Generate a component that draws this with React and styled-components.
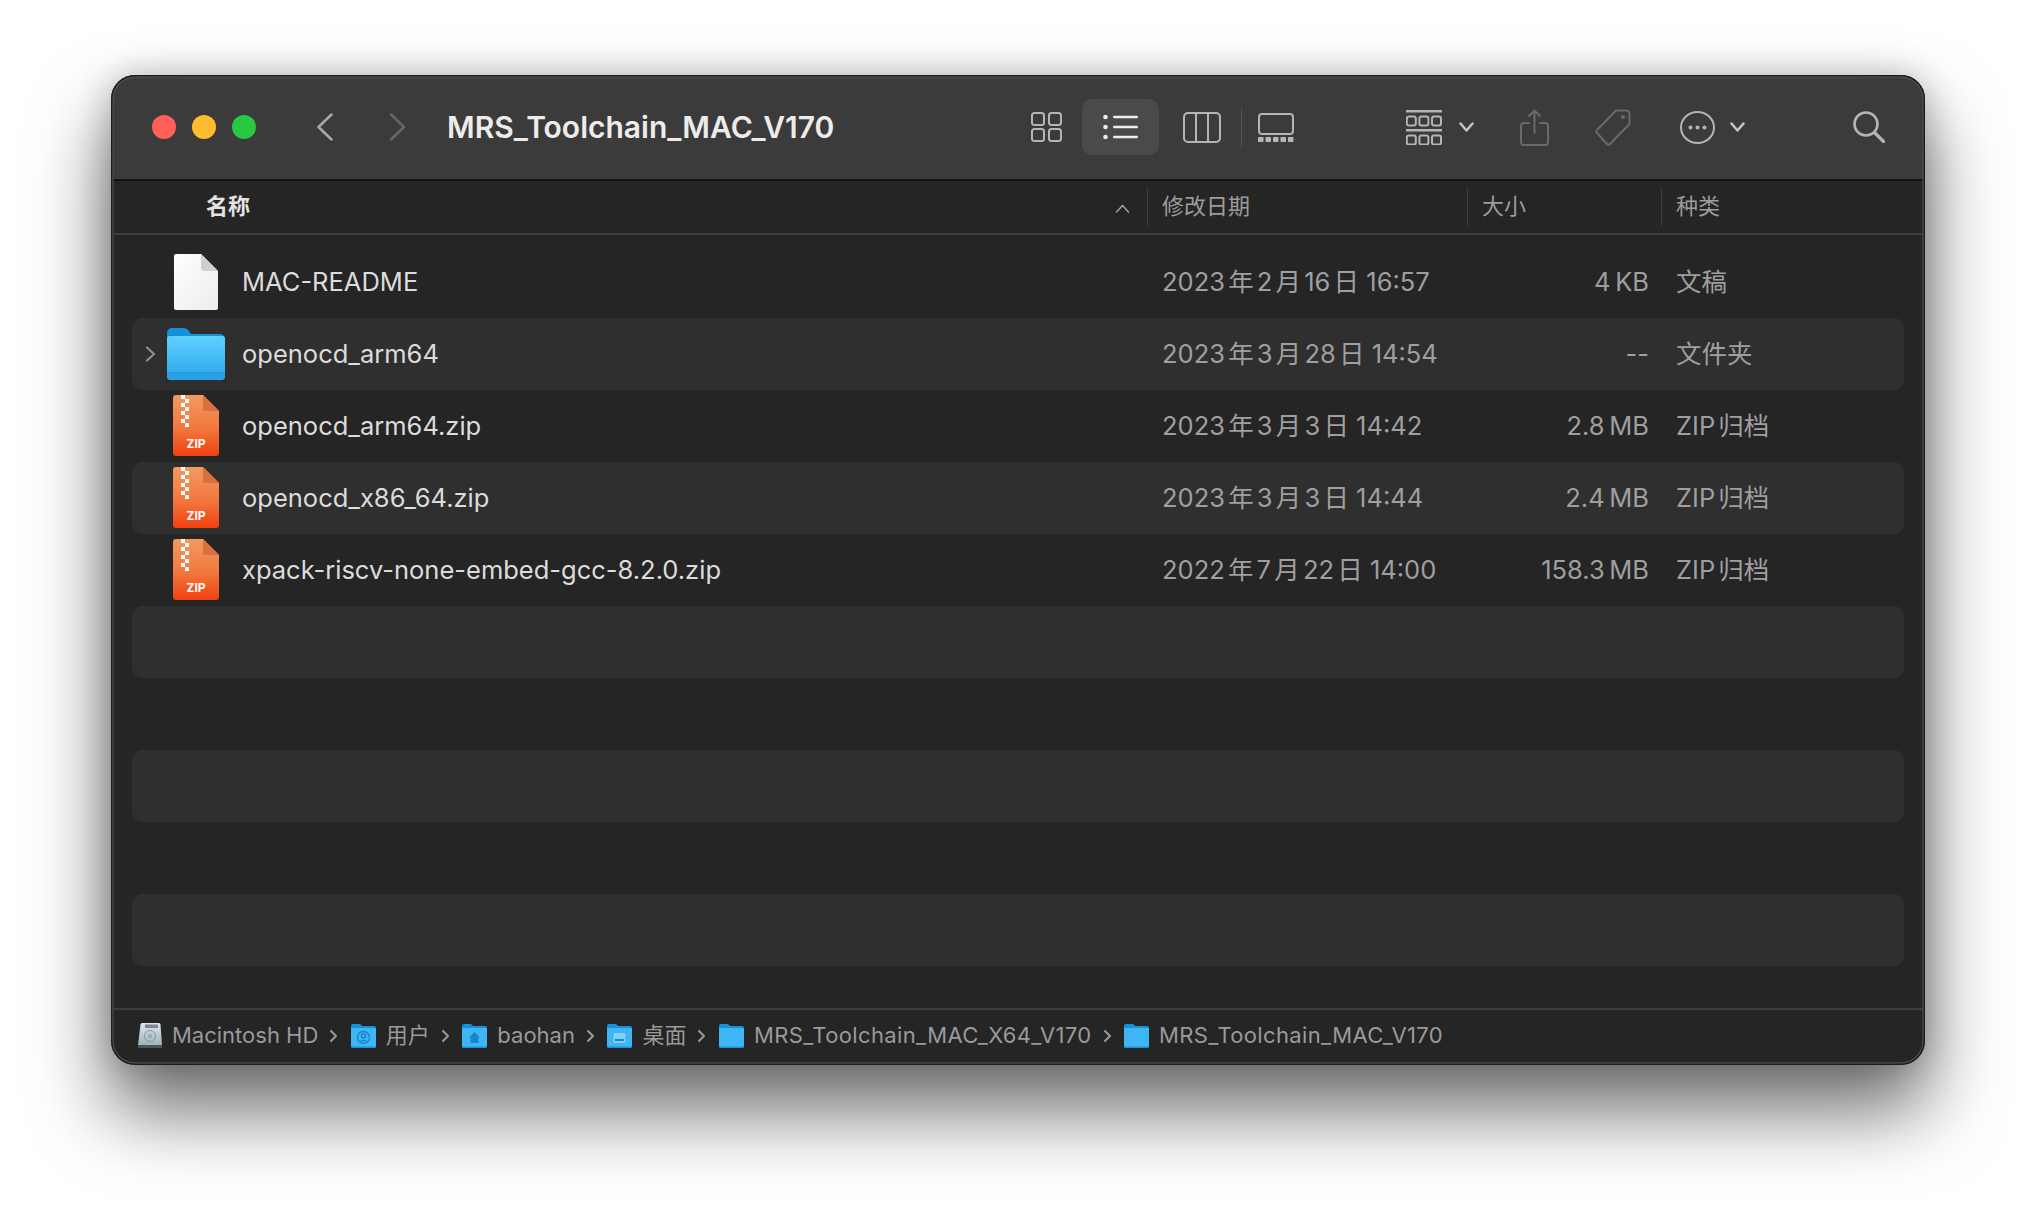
import styled, { createGlobalStyle } from "styled-components";

const GlobalStyle = createGlobalStyle`
  html, body { margin: 0; padding: 0; background: #fff; }
  body { font-family: Inter, "Noto Sans CJK SC", sans-serif; }
`;

const files = [
  { name: "MAC-README", date: "2023年2月16日 16:57", size: "4\u2009KB", kind: "文稿", icon: "doc" },
  { name: "openocd_arm64", date: "2023年3月28日 14:54", size: "--", kind: "文件夹", icon: "folder", expandable: true },
  { name: "openocd_arm64.zip", date: "2023年3月3日 14:42", size: "2.8\u2009MB", kind: "ZIP归档", icon: "zip" },
  { name: "openocd_x86_64.zip", date: "2023年3月3日 14:44", size: "2.4\u2009MB", kind: "ZIP归档", icon: "zip" },
  { name: "xpack-riscv-none-embed-gcc-8.2.0.zip", date: "2022年7月22日 14:00", size: "158.3\u2009MB", kind: "ZIP归档", icon: "zip" },
  {}, {}, {}, {}, {}, {},
];

const DocIcon = () => (
  <svg width="44" height="56" viewBox="0 0 44 56">
    <defs>
      <linearGradient id="docFill" x1="0" y1="0" x2="1" y2="1">
        <stop offset="0" stopColor="#ffffff" />
        <stop offset="1" stopColor="#ececec" />
      </linearGradient>
    </defs>
    <path d="M2 0H27L44 17V54a2 2 0 0 1-2 2H2a2 2 0 0 1-2-2V2a2 2 0 0 1 2-2z" fill="url(#docFill)" />
    <path d="M27 0L44 17H30a3 3 0 0 1-3-3z" fill="#cfcfcf" />
  </svg>
);

const FolderIcon = () => (
  <svg width="58" height="52" viewBox="0 0 58 52">
    <defs>
      <linearGradient id="folderFront" x1="0" y1="0" x2="0" y2="1">
        <stop offset="0" stopColor="#5fd0ff" />
        <stop offset="1" stopColor="#2ba6ec" />
      </linearGradient>
    </defs>
    <path d="M0 5a5 5 0 0 1 5-5H16c3 0 4 1 6 3l2 3H53a5 5 0 0 1 5 5V30H0z" fill="#1590dc" />
    <path d="M0 11a3 3 0 0 1 3-3H55a3 3 0 0 1 3 3V48a4 4 0 0 1-4 4H4a4 4 0 0 1-4-4z" fill="url(#folderFront)" />
    <rect x="0" y="44" width="58" height="1.5" fill="#1f8fd6" opacity="0.7" />
    <path d="M0 46H58V48a4 4 0 0 1-4 4H4a4 4 0 0 1-4-4z" fill="#2a9fe6" />
  </svg>
);

const ZipIcon = () => (
  <svg width="46" height="61" viewBox="0 0 46 61">
    <defs>
      <linearGradient id="zipFill" x1="0" y1="0" x2="0" y2="1">
        <stop offset="0" stopColor="#f29a60" />
        <stop offset="0.55" stopColor="#f2783f" />
        <stop offset="1" stopColor="#f0400e" />
      </linearGradient>
    </defs>
    <path d="M3 0H30L46 16V58a3 3 0 0 1-3 3H3a3 3 0 0 1-3-3V3a3 3 0 0 1 3-3z" fill="url(#zipFill)" />
    <path d="M30 0L46 16H33a3 3 0 0 1-3-3z" fill="#d9703f" />
    {[0, 8, 16, 24].map((y) => (
      <rect key={y} x="8" y={y} width="4" height="4" fill="#fff" />
    ))}
    {[4, 12, 20, 28].map((y) => (
      <rect key={y} x="12" y={y} width="4" height="4" fill="#fff" />
    ))}
    <text x="23" y="53" textAnchor="middle" fontFamily="Inter, sans-serif" fontWeight="700" fontSize="12" fill="#fff">
      ZIP
    </text>
  </svg>
);

const SmallFolder = ({ glyph }) => (
  <svg width="25" height="24" viewBox="0 0 25 24">
    <path d="M0 2a2 2 0 0 1 2-2H8c1 0 2 .6 3 2H23a2 2 0 0 1 2 2V10H0z" fill="#1590dc" />
    <path d="M0 5a1 1 0 0 1 1-1H24a1 1 0 0 1 1 1V22a2 2 0 0 1-2 2H2a2 2 0 0 1-2-2z" fill="#3fb6f4" />
    <path d="M0 22.500H25V22a2 2 0 0 1-2 2H2a2 2 0 0 1-2-2z" fill="#1f8fd6" />
    {glyph === "user" && (
      <g fill="none" stroke="#1a86c9" strokeWidth="1.4">
        <circle cx="12.5" cy="13.5" r="6" />
        <circle cx="12.5" cy="12" r="2" />
        <path d="M9 18c1-2 6-2 7 0" />
      </g>
    )}
    {glyph === "home" && <path d="M12.5 8L18 13.5H16.5V19H8.500V13.500H7z" fill="#1a86c9" />}
    {glyph === "desktop" && (
      <g>
        <rect x="6.500" y="9" width="12" height="10" rx="1" fill="#7fd0f7" />
        <rect x="8" y="15" width="9" height="2" fill="#1a86c9" />
      </g>
    )}
  </svg>
);

const DiskIcon = () => (
  <svg width="24" height="25" viewBox="0 0 24 25">
    <defs>
      <linearGradient id="diskFill" x1="0" y1="0" x2="0" y2="1">
        <stop offset="0" stopColor="#dfe7ea" />
        <stop offset="1" stopColor="#9fb4bd" />
      </linearGradient>
    </defs>
    <path d="M4 0H21a1.500 1.500 0 0 1 1.500 1.500L24 22H0L2.500 1.500A1.500 1.500 0 0 1 4 0z" fill="url(#diskFill)" />
    <rect x="7" y="1.500" width="13" height="3.500" fill="#7c8a90" />
    <circle cx="12" cy="13" r="5.500" fill="none" stroke="#8499a3" strokeWidth="1" />
    <circle cx="12" cy="13" r="1.500" fill="none" stroke="#8499a3" strokeWidth="1" />
    <rect x="0" y="22" width="24" height="3" fill="#4c5659" />
  </svg>
);

const stroke = { fill: "none", stroke: "currentColor", strokeWidth: 2, strokeLinecap: "round", strokeLinejoin: "round" };

const Back = () => (
  <svg width="16" height="28" viewBox="0 0 16 28"><path d="M14.500 1.500L1.500 14L14.500 26.500" {...stroke} strokeWidth="2.500" /></svg>
);
const Forward = () => (
  <svg width="17" height="28" viewBox="0 0 17 28"><path d="M2 1.500L15 14L2 26.500" {...stroke} strokeWidth="2.500" /></svg>
);
const GridGlyph = () => (
  <svg width="31" height="30" viewBox="0 0 31 30">
    <g {...stroke}>
      <rect x="1" y="1" width="12" height="12" rx="2.500" />
      <rect x="18" y="1" width="12" height="12" rx="2.500" />
      <rect x="1" y="17" width="12" height="12" rx="2.500" />
      <rect x="18" y="17" width="12" height="12" rx="2.500" />
    </g>
  </svg>
);
const ListGlyph = () => (
  <svg width="35" height="26" viewBox="0 0 35 26">
    <g fill="#eee">
      <circle cx="2.500" cy="3" r="2.300" />
      <circle cx="2.500" cy="13" r="2.300" />
      <circle cx="2.500" cy="23" r="2.300" />
      <rect x="10" y="1.800" width="25" height="2.400" rx="1.200" />
      <rect x="10" y="11.800" width="25" height="2.400" rx="1.200" />
      <rect x="10" y="21.800" width="25" height="2.400" rx="1.200" />
    </g>
  </svg>
);
const ColumnsGlyph = () => (
  <svg width="38" height="31" viewBox="0 0 38 31">
    <g {...stroke}>
      <rect x="1" y="1" width="36" height="29" rx="4" />
      <path d="M13 1V30M25 1V30" />
    </g>
  </svg>
);
const GalleryGlyph = () => (
  <svg width="36" height="29" viewBox="0 0 36 29">
    <rect x="1" y="1" width="34" height="20" rx="3" {...stroke} />
    <g fill="currentColor">
      {[0, 7.500, 15, 22.500, 30].map((x) => (
        <rect key={x} x={x} y="24" width="5.500" height="5" rx="0.800" />
      ))}
    </g>
  </svg>
);
const GroupGlyph = () => (
  <svg width="36" height="35" viewBox="0 0 36 35">
    <g fill="currentColor">
      <rect x="0" y="0" width="36" height="2.500" />
      <rect x="0" y="19" width="36" height="2.500" />
    </g>
    <g {...stroke}>
      {[0.800, 13.400, 26].map((x) => (
        <g key={x}>
          <rect x={x} y="6.500" width="9" height="9" rx="2" />
          <rect x={x} y="25.500" width="9" height="9" rx="2" />
        </g>
      ))}
    </g>
  </svg>
);
const Caret = () => (
  <svg width="15" height="10" viewBox="0 0 15 10"><path d="M1.500 1.500L7.500 8.500L13.500 1.500" {...stroke} strokeWidth="2.400" /></svg>
);
const ShareGlyph = () => (
  <svg width="29" height="37" viewBox="0 0 29 37">
    <g {...stroke}>
      <path d="M9 14H4a3 3 0 0 0-3 3V33a3 3 0 0 0 3 3H25a3 3 0 0 0 3-3V17a3 3 0 0 0-3-3H20" />
      <path d="M14.500 24V1.500M9 7L14.500 1.500L20 7" />
    </g>
  </svg>
);
const TagGlyph = () => (
  <svg width="36" height="37" viewBox="0 0 36 37">
    <g {...stroke}>
      <path d="M21 1.500H31a3.500 3.500 0 0 1 3.500 3.500V15L15 35a2 2 0 0 1-3 0L2 24a2 2 0 0 1 0-3z" />
    </g>
    <circle cx="28" cy="8" r="2" fill="currentColor" />
  </svg>
);
const MoreGlyph = () => (
  <svg width="35" height="33" viewBox="0 0 35 33">
    <ellipse cx="17.500" cy="16.500" rx="16.500" ry="15.500" {...stroke} />
    <g fill="currentColor">
      <circle cx="10.500" cy="16.500" r="2" />
      <circle cx="17.500" cy="16.500" r="2" />
      <circle cx="24.500" cy="16.500" r="2" />
    </g>
  </svg>
);
const SearchGlyph = () => (
  <svg width="32" height="32" viewBox="0 0 32 32">
    <g {...stroke} strokeWidth="2.600">
      <circle cx="13" cy="13" r="11.500" />
      <path d="M21.500 21.500L30.500 30.500" strokeWidth="3.200" />
    </g>
  </svg>
);
const SortCaret = () => (
  <svg width="15" height="9" viewBox="0 0 15 9"><path d="M1.500 8L7.500 1.500L13.500 8" {...stroke} strokeWidth="1.500" /></svg>
);
const Disclosure = () => (
  <svg width="11" height="16" viewBox="0 0 11 16"><path d="M2 1.500L9 8L2 14.500" {...stroke} strokeWidth="2.200" /></svg>
);
const Crumb = () => (
  <svg width="7" height="12" viewBox="0 0 7 12"><path d="M1 1L6 6L1 11" {...stroke} /></svg>
);

const App = () => (
  <Page>
    <GlobalStyle />
    <Window>
      <Toolbar>
        <Lights>
          <Light $color="#ff5f57" />
          <Light $color="#febc2e" />
          <Light $color="#28c840" />
        </Lights>
        <Tool $ml={61} $color="#a8a8a8"><Back /></Tool>
        <Tool $ml={56} $color="#666"><Forward /></Tool>
        <Title>MRS_Toolchain_MAC_V170</Title>
        <Tools>
          <Tool $color="#b5b5b5"><GridGlyph /></Tool>
          <ActiveTool><ListGlyph /></ActiveTool>
          <Tool $ml={24} $color="#b5b5b5"><ColumnsGlyph /></Tool>
          <ToolDivider />
          <Tool $ml={16} $color="#b5b5b5"><GalleryGlyph /></Tool>
          <Tool $ml={112} $color="#b5b5b5"><GroupGlyph /></Tool>
          <Tool $ml={17} $color="#c8c8c8"><Caret /></Tool>
          <Tool $ml={46} $color="#6a6a6a"><ShareGlyph /></Tool>
          <Tool $ml={46} $color="#6a6a6a"><TagGlyph /></Tool>
          <Tool $ml={49} $color="#b5b5b5"><MoreGlyph /></Tool>
          <Tool $ml={15} $color="#c8c8c8"><Caret /></Tool>
          <Tool $ml={108} $color="#b5b5b5"><SearchGlyph /></Tool>
        </Tools>
      </Toolbar>

      <Header>
        <NameHead>
          名称
          <SortMark><SortCaret /></SortMark>
        </NameHead>
        <HeadCell>修改日期</HeadCell>
        <HeadCell>大小</HeadCell>
        <HeadCell>种类</HeadCell>
      </Header>

      <List>
        {files.map((file, i) => (
          <Row key={i} $striped={i % 2 === 1}>
            {file.name && (
              <>
                <Arrow>{file.expandable && <Disclosure />}</Arrow>
                <FileIcon>
                  {file.icon === "doc" && <DocIcon />}
                  {file.icon === "folder" && <FolderIcon />}
                  {file.icon === "zip" && <ZipIcon />}
                </FileIcon>
                <Name>{file.name}</Name>
                <Meta>{file.date}</Meta>
                <Size>{file.size}</Size>
                <Meta>{file.kind}</Meta>
              </>
            )}
          </Row>
        ))}
      </List>

      <PathBar>
        <PathItem><DiskIcon /><PathText>Macintosh HD</PathText></PathItem>
        <PathArrow><Crumb /></PathArrow>
        <PathItem><SmallFolder glyph="user" /><PathText>用户</PathText></PathItem>
        <PathArrow><Crumb /></PathArrow>
        <PathItem><SmallFolder glyph="home" /><PathText>baohan</PathText></PathItem>
        <PathArrow><Crumb /></PathArrow>
        <PathItem><SmallFolder glyph="desktop" /><PathText>桌面</PathText></PathItem>
        <PathArrow><Crumb /></PathArrow>
        <PathItem><SmallFolder /><PathText $wide>MRS_Toolchain_MAC_X64_V170</PathText></PathItem>
        <PathArrow><Crumb /></PathArrow>
        <PathItem><SmallFolder /><PathText $wide>MRS_Toolchain_MAC_V170</PathText></PathItem>
      </PathBar>
    </Window>
  </Page>
);

const Page = styled.div`
  width: 2036px;
  height: 1212px;
  padding: 75px 0 0 111px;
  box-sizing: border-box;
  overflow: hidden;
  background: #fff;
`;

const Window = styled.div`
  position: relative;
  width: 1814px;
  height: 990px;
  display: flex;
  flex-direction: column;
  overflow: hidden;
  border-radius: 24px;
  background: #252525;
  box-shadow: 0 44px 76px 4px rgba(0, 0, 0, 0.55), 0 0 34px rgba(0, 0, 0, 0.22);

  /* the hairline rim sits over the toolbar and the list */
  &::after {
    content: "";
    position: absolute;
    inset: 0;
    border-radius: 24px;
    box-shadow: inset 0 0 0 1.5px #1c1c1c, inset 0 0 0 2.5px #585858;
    pointer-events: none;
  }
`;

const Toolbar = styled.div`
  height: 106px;
  flex: none;
  display: flex;
  align-items: center;
  padding: 0 40px 0 41px;
  box-sizing: border-box;
  background: #3b3b3b;
  border-bottom: 2px solid #111;
`;

const Lights = styled.div`
  display: flex;
  gap: 16px;
`;

const Light = styled.span`
  width: 24px;
  height: 24px;
  border-radius: 50%;
  background: ${(p) => p.$color};
`;

const Tool = styled.span`
  display: flex;
  align-items: center;
  margin-left: ${(p) => p.$ml || 0}px;
  color: ${(p) => p.$color};
`;

const ActiveTool = styled.span`
  width: 77px;
  height: 56px;
  margin-left: 20px;
  display: flex;
  align-items: center;
  justify-content: center;
  border-radius: 10px;
  background: #4a4a4a;
`;

const ToolDivider = styled.span`
  width: 1px;
  height: 39px;
  margin-left: 20px;
  background: #555;
`;

const Title = styled.div`
  margin-left: 41px;
  font-size: 30px;
  line-height: 36px;
  font-weight: 600;
  color: #ececec;
  white-space: nowrap;
`;

const Tools = styled.div`
  margin-left: auto;
  display: flex;
  align-items: center;
`;

const Header = styled.div`
  height: 54px;
  flex: none;
  display: grid;
  grid-template-columns: 1036px 320px 194px 1fr;
  align-items: center;
  border-bottom: 2px solid #3d3d3d;
  box-sizing: border-box;
`;

const HeadCell = styled.div`
  height: 38px;
  line-height: 36px;
  padding-left: 14px;
  border-left: 1px solid #3c3c3c;
  font-size: 22px;
  color: #9c9c9c;
`;

const NameHead = styled.div`
  display: flex;
  align-items: center;
  justify-content: space-between;
  padding: 0 17px 2px 95px;
  font-size: 22px;
  line-height: 34px;
  font-weight: 700;
  color: #e2e2e2;
`;

const SortMark = styled.span`
  display: flex;
  color: #a0a0a0;
  margin-top: 4px;
`;

const List = styled.div`
  flex: 1;
  min-height: 0;
  padding: 11px 21px 0;
  overflow: hidden;
`;

const Row = styled.div`
  height: 72px;
  display: grid;
  grid-template-columns: 35px 75px 920px 355px 159px 1fr;
  align-items: center;
  border-radius: 10px;
  background: ${(p) => (p.$striped ? "#2f2f2f" : "transparent")};
`;

const Arrow = styled.span`
  display: flex;
  justify-content: flex-end;
  padding-right: 11px;
  color: #8f8f8f;
`;

const FileIcon = styled.span`
  display: flex;
  justify-content: center;
  padding: 0 17px 1px 0;
`;

const Name = styled.span`
  font-size: 25.5px;
  line-height: 32px;
  color: #dcdcdc;
  white-space: nowrap;
`;

const Meta = styled.span`
  font-size: 25.5px;
  line-height: 32px;
  color: #9f9f9f;
  white-space: nowrap;
  text-autospace: normal;
`;

const Size = styled(Meta)`
  text-align: right;
  padding-right: 27px;
`;

const PathBar = styled.div`
  height: 57px;
  flex: none;
  display: flex;
  align-items: center;
  padding: 0 0 4px 27px;
  box-sizing: border-box;
  border-top: 2px solid #3d3d3d;
`;

const PathItem = styled.span`
  display: flex;
  align-items: center;
  gap: 10px;
`;

const PathText = styled.span`
  font-size: 22px;
  line-height: 28px;
  padding-bottom: 2px;
  color: #9a9a9a;
  white-space: nowrap;
  letter-spacing: ${(p) => (p.$wide ? "0.36px" : "normal")};
`;

const PathArrow = styled.span`
  display: flex;
  margin: 0 13.500px 0 12px;
  color: #9a9a9a;
`;

export default App;
